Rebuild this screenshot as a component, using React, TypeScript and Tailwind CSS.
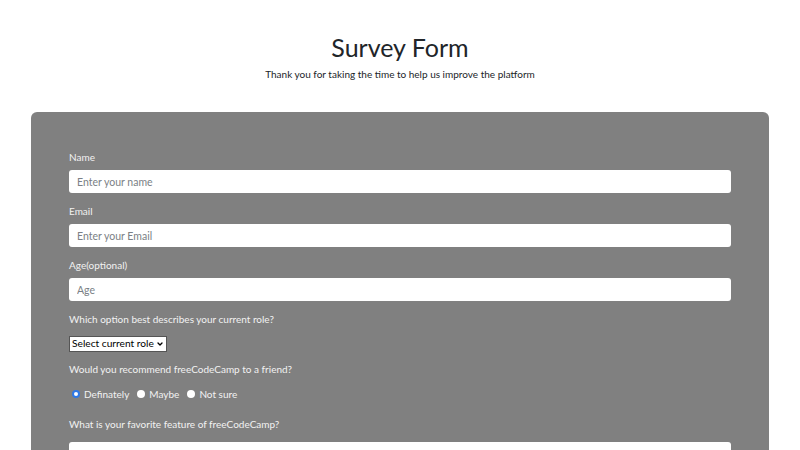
import { ChevronDown } from "lucide-react";

const FONT = "font-['Segoe_UI','Lato','Noto_Sans',sans-serif]";

function TextField({ label, placeholder, type = "text" }: { label: string; placeholder: string; type?: string }) {
  return (
    <div className="mb-[10px] flex flex-col">
      <label className="mb-[5px] text-[10px] leading-4 text-[#f2f2f2]">{label}</label>
      <input
        type={type}
        placeholder={placeholder}
        className="h-[23px] w-full rounded-[3px] bg-white px-2 text-[10.5px] text-[#212529] outline-none placeholder:text-[#7a7f85]"
      />
    </div>
  );
}

function Radio({ label, checked }: { label: string; checked?: boolean }) {
  return (
    <label className="flex items-center gap-[4px]">
      <span
        className={`h-2 w-2 rounded-full bg-white ${checked ? "border-[2px] border-[#2e78e6]" : ""}`}
      />
      <span>{label}</span>
    </label>
  );
}

export default function App() {
  return (
    <div className={`min-h-[450px] w-[800px] overflow-hidden bg-white ${FONT}`}>
      <header className="flex flex-col items-center pt-[30px]">
        <h1 className="text-[25px] leading-[34px] font-normal text-[#212529]">Survey Form</h1>
        <p className="mt-[2px] text-[10px] leading-4 text-[#212529]">
          Thank you for taking the time to help us improve the platform
        </p>
      </header>

      <form className="mx-[31px] mt-[30px] rounded-[6px] bg-[#808080] px-[38px] pb-6 pt-[37px]">
        <TextField label="Name" placeholder="Enter your name" />
        <TextField label="Email" placeholder="Enter your Email" type="email" />
        <TextField label="Age(optional)" placeholder="Age" type="number" />

        <p className="mb-[9px] text-[10px] leading-4 text-[#f2f2f2]">Which option best describes your current role?</p>
        <div className="mb-[9px] flex h-4 w-fit items-center gap-[2px] whitespace-nowrap border border-[#555] bg-white px-[2px] text-[10.2px] text-black">
          <span>Select current role</span>
          <ChevronDown className="h-[8px] w-[8px]" strokeWidth={4} />
        </div>

        <p className="mb-[9px] text-[10px] leading-4 text-[#f2f2f2]">Would you recommend freeCodeCamp to a friend?</p>
        <div className="mb-[14px] flex h-4 items-center gap-[8px] pl-[3px] text-[10px] text-[#f2f2f2]">
          <Radio label="Definately" checked />
          <Radio label="Maybe" />
          <Radio label="Not sure" />
        </div>

        <p className="mb-[10px] text-[10px] leading-4 text-[#f2f2f2]">What is your favorite feature of freeCodeCamp?</p>
        <div className="h-[23px] w-full rounded-[3px] bg-white" />
      </form>
    </div>
  );
}
